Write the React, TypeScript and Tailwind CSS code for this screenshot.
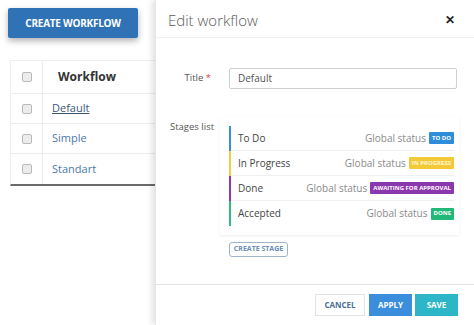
import React from 'react';

type Stage = { name: string; bar: string; badge: string; badgeBg: string; badgeText: string };

const stages: Stage[] = [
    { name: 'To Do', bar: 'bg-[#3a8fd6]', badge: 'TO DO', badgeBg: 'bg-[#2e8ddb]', badgeText: 'text-white' },
    { name: 'In Progress', bar: 'bg-[#f3cd45]', badge: 'IN PROGRESS', badgeBg: 'bg-[#f4c937]', badgeText: 'text-[#fff6d8]' },
    { name: 'Done', bar: 'bg-[#8e3bb0]', badge: 'AWAITING FOR APPROVAL', badgeBg: 'bg-[#8b37ad]', badgeText: 'text-white' },
    { name: 'Accepted', bar: 'bg-[#2ebd86]', badge: 'DONE', badgeBg: 'bg-[#22b877]', badgeText: 'text-white' },
];

const workflows = ['Default', 'Simple', 'Standart'];

const Checkbox = () => (
    <span className="block w-[10px] h-[10px] rounded-[2px] border border-[#b9b9b9] bg-[#ececec]" />
);

const App = () => {
    return (
        <div className="relative w-[474px] h-[325px] overflow-hidden bg-white" style={{ fontFamily: '"Open Sans", "Liberation Sans", sans-serif' }}>
            {/* 목록 화면 */}
            <div className="pt-[8px] pl-[8px]">
                <button className="w-[130px] h-[30px] rounded-[2px] bg-[#2f73b6] text-white text-[10px] font-bold tracking-tight shadow-[0_3px_6px_rgba(0,0,0,0.3)]">
                    CREATE WORKFLOW
                </button>

                <div className="mt-[22px] ml-[2px] w-[200px] border-t border-l border-[#eeeeee] border-b-2 border-b-[#6a6a6a]">
                    <div className="flex h-[33px] border-b border-[#ececec]">
                        <div className="w-[32px] flex items-center justify-center border-r border-[#ececec]">
                            <Checkbox />
                        </div>
                        <div className="flex items-center pl-[15px] text-[12px] font-bold text-[#333]">Workflow</div>
                    </div>
                    {workflows.map((w, i) => (
                        <div key={w} className={`flex h-[30px] ${i < workflows.length - 1 ? 'border-b border-[#ececec]' : ''}`}>
                            <div className="w-[32px] flex items-center justify-center border-r border-[#ececec]">
                                <Checkbox />
                            </div>
                            <div className={`flex items-center pl-[9px] text-[11px] ${i === 0 ? 'text-[#3d5877] underline' : 'text-[#4d78aa]'}`}>
                                {w}
                            </div>
                        </div>
                    ))}
                </div>
            </div>

            {/* 편집 드로어 */}
            <div className="absolute top-0 left-[155px] w-[319px] h-full bg-white flex flex-col shadow-[-3px_0_6px_rgba(0,0,0,0.12)] border-l border-[#e6e6e6]">
                <div className="h-[38px] flex items-center justify-between pl-[12px] pr-[19px] pt-[3px] border-b border-[#f0f0f0] shrink-0">
                    <span className="text-[15px] font-light text-[#5a5a5a]">Edit workflow</span>
                    <span className="text-[12px] font-bold text-[#222] leading-none">✕</span>
                </div>

                <div className="flex pl-[14px]">
                    <div className="w-[41px] text-right text-[9.5px] text-[#555]">
                        <div className="mt-[32px] h-[16px] leading-[16px] whitespace-nowrap">
                            Title <span className="text-[#e0453a]">*</span>
                        </div>
                        <div className="mt-[34px] whitespace-nowrap">Stages list</div>
                    </div>

                    <div className="ml-[9px] w-[239px]">
                        <div className="mt-[30px] ml-[9px] w-[228px] h-[21px] border border-[#cfcfcf] rounded-[2px] flex items-center pl-[8px] text-[10px] text-[#555]">
                            Default
                        </div>

                        <div className="mt-[28px] pl-[9px] pr-[5px] py-[9px] shadow-[0_1px_3px_rgba(0,0,0,0.07)]">
                            {stages.map((s, i) => (
                                <div key={s.name} className="flex h-[25px]">
                                    <div className={`w-[2px] ${s.bar}`} />
                                    <div className={`flex-1 flex items-center justify-between pl-[7px] ${i < stages.length - 1 ? 'border-b border-[#efefef]' : ''}`}>
                                        <span className="text-[10px] text-[#444]">{s.name}</span>
                                        <span className="flex items-center gap-[3px]">
                                            <span className="text-[10px] text-[#8a8a8a]">Global status</span>
                                            <span className={`h-[12px] px-[3px] flex items-center rounded-[1px] text-[6px] font-bold ${s.badgeBg} ${s.badgeText}`}>
                                                {s.badge}
                                            </span>
                                        </span>
                                    </div>
                                </div>
                            ))}
                        </div>

                        <button className="mt-[7px] ml-[9px] w-[59px] h-[15px] rounded-[3px] border-[1.5px] border-[#9fb3cb] text-[7px] font-bold text-[#6b8db3] flex items-center justify-center">
                            CREATE STAGE
                        </button>
                    </div>
                </div>

                <div className="mt-auto h-[41px] border-t border-[#e2e2e2] flex items-center justify-end gap-[3px] pr-[16px] shrink-0">
                    <button className="w-[50px] h-[22px] border border-[#e3e3e3] bg-white text-[8px] font-bold text-[#4b6f96]">CANCEL</button>
                    <button className="w-[43px] h-[22px] bg-[#3a8edb] text-[8px] font-bold text-white ml-[1px]">APPLY</button>
                    <button className="w-[43px] h-[22px] bg-[#2db6c8] text-[8px] font-bold text-white">SAVE</button>
                </div>
            </div>
        </div>
    );
};

export default App;
